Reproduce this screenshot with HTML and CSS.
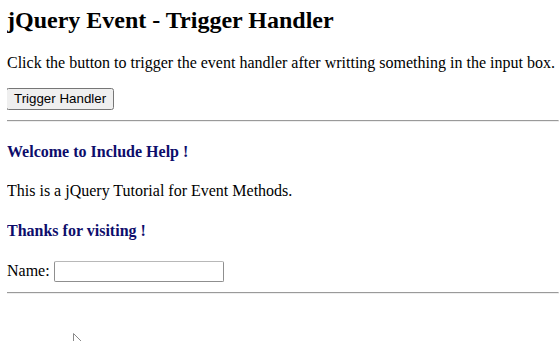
FILE: index.html
```html
<!DOCTYPE html>
<html>
<head>
<meta charset="utf-8">
<link rel="stylesheet" href="styles.css">
</head>
<body>
<h2 class="title">jQuery Event - Trigger Handler</h2>
<p>Click the button to trigger the event handler after writting something in the input box.</p>
<button class="btn">Trigger Handler</button>
<hr class="rule rule-top">
<h4 class="note">Welcome to Include Help !</h4>
<p>This is a jQuery Tutorial for Event Methods.</p>
<h4 class="note">Thanks for visiting !</h4>
Name: <input class="name" type="text">
<hr class="rule rule-end">
<svg class="cursor" width="12" height="10" viewBox="0 0 12 10"><path d="M0.5 0.5 L0.5 10 M0.5 0.5 L9 9" fill="none" stroke="#8a8a8a" stroke-width="1"/></svg>
</body>
</html>
```
FILE: styles.css
```css
body {
  font-family: "Liberation Serif", "Times New Roman", serif;
  font-size: 16px;
  margin: 7px 0 8px 7px;
  color: #000;
  background: #fff;
  overflow: hidden;
}
.title {
  font-size: 24px;
  font-weight: bold;
  margin-top: 0;
}
.btn {
  font-family: "Liberation Sans", Arial, sans-serif;
  font-size: 13.333px;
  margin-left: -1px;
  height: 22px;
  padding: 1px 6px;
}
.rule {
  margin-left: -1px;
}
.rule-top {
  margin-top: 10px;
  margin-bottom: 11px;
}
.rule-end {
  margin-top: 10px;
}
.note {
  color: #0d0d6b;
}
.name {
  font-family: "Liberation Sans", Arial, sans-serif;
  font-size: 13.333px;
  box-sizing: border-box;
  width: 170px;
  height: 21px;
  border: 1px solid #8f8f8f;
  border-top-color: #b8b8b8;
  border-radius: 2px;
  padding: 1px 2px;
}
.cursor {
  position: absolute;
  left: 73px;
  top: 333px;
}
```
